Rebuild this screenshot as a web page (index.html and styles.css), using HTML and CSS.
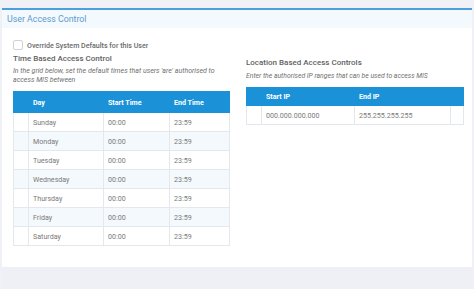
FILE: index.html
```html
<!DOCTYPE html>
<html lang="en">
<head>
    <meta charset="UTF-8">
    <title>User Access Control</title>
    <link rel="stylesheet" href="styles.css">
</head>
<body>
    <div class="topbar"></div>

    <div class="panel">
        <div class="panel-heading">User Access Control</div>

        <div class="panel-body">
            <label class="override">
                <span class="checkbox"></span>
                Override System Defaults for this User
            </label>

            <div class="columns">
                <div class="column">
                    <h3>Time Based Access Control</h3>
                    <p class="hint">In the grid below, set the default times that users 'are' authorised to access MIS between</p>

                    <table class="grid">
                        <colgroup>
                            <col class="c-sel">
                            <col class="c-day">
                            <col class="c-start">
                            <col class="c-end">
                        </colgroup>
                        <thead>
                            <tr><th></th><th>Day</th><th>Start Time</th><th>End Time</th></tr>
                        </thead>
                        <tbody>
                            <tr><td></td><td>Sunday</td><td>00:00</td><td>23:59</td></tr>
                            <tr><td></td><td>Monday</td><td>00:00</td><td>23:59</td></tr>
                            <tr><td></td><td>Tuesday</td><td>00:00</td><td>23:59</td></tr>
                            <tr><td></td><td>Wednesday</td><td>00:00</td><td>23:59</td></tr>
                            <tr><td></td><td>Thursday</td><td>00:00</td><td>23:59</td></tr>
                            <tr><td></td><td>Friday</td><td>00:00</td><td>23:59</td></tr>
                            <tr><td></td><td>Saturday</td><td>00:00</td><td>23:59</td></tr>
                        </tbody>
                    </table>
                </div>

                <div class="column location">
                    <h3>Location Based Access Controls</h3>
                    <p class="hint">Enter the authorised IP ranges that can be used to access MIS</p>

                    <table class="grid ip-grid">
                        <colgroup>
                            <col class="c-sel">
                            <col class="c-ip-start">
                            <col class="c-ip-end">
                            <col class="c-tail">
                        </colgroup>
                        <thead>
                            <tr><th></th><th>Start IP</th><th>End IP</th><th></th></tr>
                        </thead>
                        <tbody>
                            <tr><td></td><td>000.000.000.000</td><td>255.255.255.255</td><td></td></tr>
                        </tbody>
                    </table>
                </div>
            </div>
        </div>
    </div>

    <div class="footer"></div>
</body>
</html>
```

FILE: styles.css
```css
body {
    margin: 0;
    font-family: Roboto, "Noto Sans", sans-serif;
    background: #f0f1f6;
    color: #666;
}

.topbar {
    height: 8px;
}

.panel {
    margin: 0 2px;
    background: #fff;
    border-top: 2px solid #4aa0dc;
}

.panel-heading {
    height: 18px;
    line-height: 19px;
    padding-left: 5px;
    background: #f4f9fd;
    color: #5b9bd0;
    font-size: 8.8px;
}

.panel-body {
    padding: 12px 9px 21px 11px;
}

.override {
    display: flex;
    align-items: center;
    gap: 4px;
    height: 10px;
    font-size: 7.1px;
    font-weight: 500;
    color: #6a6a6a;
}

.checkbox {
    width: 8px;
    height: 8px;
    border: 1px solid #cfd2d6;
    border-radius: 2px;
    background: #fff;
}

.columns {
    display: flex;
    gap: 17px;
    margin-top: 4px;
}

.column {
    width: 216px;
}

.column.location {
    width: 217px;
    margin-top: 4px;
}

h3 {
    margin: 0;
    font-size: 8px;
    font-weight: 500;
    line-height: 10px;
    color: #5f5f5f;
}

.hint {
    margin: 3px 0 6px;
    font-size: 7px;
    font-style: italic;
    line-height: 9px;
    color: #6f6f6f;
}

.location .hint {
    margin: 4px 0 6px;
    font-size: 6.8px;
}

.grid {
    width: 100%;
    border-collapse: collapse;
    table-layout: fixed;
    font-size: 7.1px;
}

.grid th {
    height: 20px;
    padding: 0 0 0 4px;
    background: #1b92d8;
    border: 1px solid #1b92d8;
    border-left-color: #5ab0e3;
    color: #fff;
    font-weight: 700;
    text-align: left;
}

.grid th:first-child {
    border-left-color: #1b92d8;
}

.grid td {
    height: 18px;
    padding: 0 0 0 4px;
    border: 1px solid #e4e7eb;
    color: #7a7a7a;
}

.grid tbody tr:nth-child(even) td {
    background: #f4f9fd;
}

.ip-grid th {
    height: 17px;
}

.c-sel { width: 15px; }
.c-day { width: 75px; }
.c-start { width: 66px; }
.c-end { width: 60px; }
.c-ip-start { width: 93px; }
.c-ip-end { width: 96px; }
.c-tail { width: 13px; }

.footer {
    margin: 0 2px;
    height: 22px;
    background: #eff0f5;
}
```
